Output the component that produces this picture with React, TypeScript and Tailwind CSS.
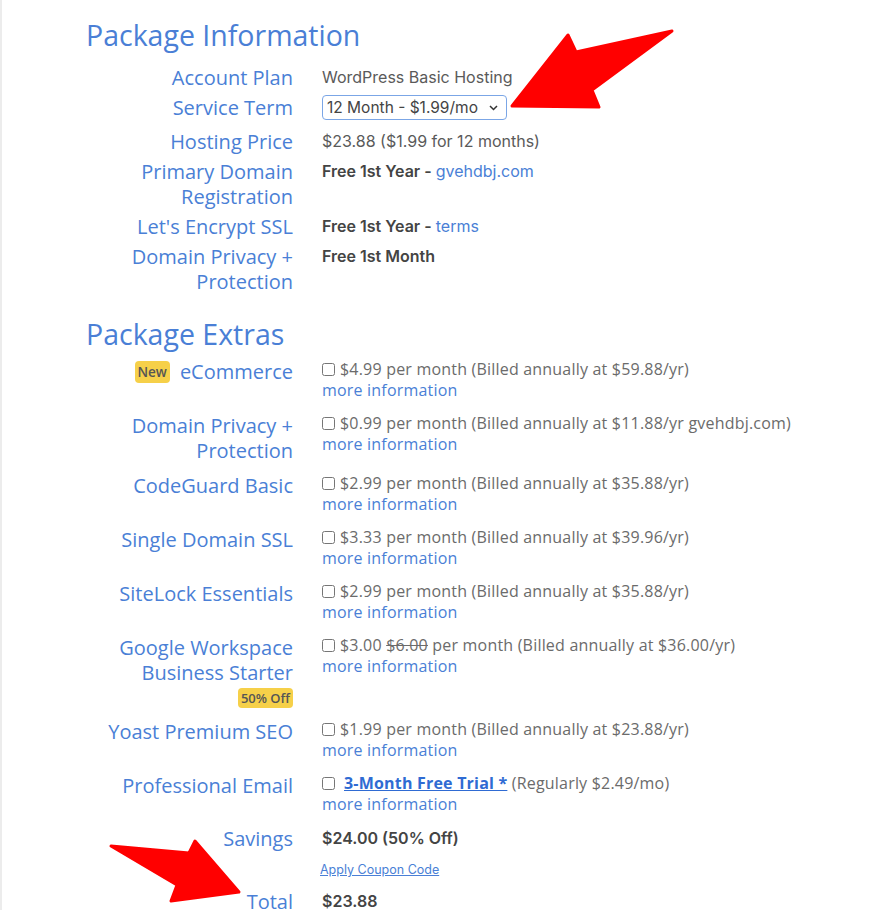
import React from "react";

const label = "w-[207px] shrink-0 text-right text-[20px] leading-[25px] text-[#4a7fd6]";
const val = "font-['Inter',sans-serif] text-[16px] leading-[25px] text-[#5a5a5a]";

function InfoRow({ name, children, className = "" }: { name: React.ReactNode; children?: React.ReactNode; className?: string }) {
  return (
    <div className={"flex gap-[29px] " + className}>
      <div className={label}>{name}</div>
      <div className={val}>{children}</div>
    </div>
  );
}

function ExtraRow({ name, children, className = "" }: { name: React.ReactNode; children: React.ReactNode; className?: string }) {
  return (
    <div className={"flex gap-[29px] " + className}>
      <div className={label}>{name}</div>
      <div className="text-[16px] leading-[21px] tracking-[0.2px] text-[#6b6b6b]">
        <div className="flex items-center">
          <input type="checkbox" className="m-0 mr-[5px] h-[13px] w-[13px] shrink-0" />
          <span>{children}</span>
        </div>
        <div className="text-[#4a7fd6]">more information</div>
      </div>
    </div>
  );
}

export default function App() {
  return (
    <div className="relative min-h-[910px] w-[884px] overflow-hidden border-l-2 border-[#ececec] bg-white pl-[84px] font-['Open_Sans',sans-serif]">
      <h2 className="pt-[16px] text-[28.5px] leading-[38px] text-[#4a7fd6]">Package Information</h2>

      <div className="mt-[11px] flex flex-col gap-[5px]">
        <InfoRow name="Account Plan">WordPress Basic Hosting</InfoRow>
        <InfoRow name="Service Term">
          <div className="flex h-[25px] w-[185px] items-center justify-between rounded-[4px] border border-[#7ba6e6] pl-[4px] pr-[8px] text-[15.5px] text-[#444]">
            <span>12 Month - $1.99/mo</span>
            <svg width="9" height="6" viewBox="0 0 9 6" fill="none">
              <path d="M1 1l3.5 3.5L8 1" stroke="#333" strokeWidth="1.5" />
            </svg>
          </div>
        </InfoRow>
        <InfoRow name="Hosting Price" className="mt-[4px]">$23.88 ($1.99 for 12 months)</InfoRow>
        <InfoRow name={<>Primary Domain<br />Registration</>}>
          <span className="font-semibold text-[#444]">Free 1st Year - </span>
          <span className="text-[#4a7fd6]">gvehdbj.com</span>
        </InfoRow>
        <InfoRow name="Let's Encrypt SSL">
          <span className="font-semibold text-[#444]">Free 1st Year - </span>
          <span className="text-[#4a7fd6]">terms</span>
        </InfoRow>
        <InfoRow name={<>Domain Privacy +<br />Protection</>}>
          <span className="font-semibold text-[#444]">Free 1st Month</span>
        </InfoRow>
      </div>

      <h2 className="mt-[21px] text-[28.5px] leading-[38px] text-[#4a7fd6]">Package Extras</h2>

      <div className="mt-[6px] flex flex-col gap-[12px]">
        <ExtraRow
          name={
            <span className="flex h-[25px] items-center justify-end gap-[10px]">
              <span className="rounded-[4px] bg-[#f6d049] px-[3px] text-[13.5px] leading-[22px] font-semibold text-[#555]">New</span>
              eCommerce
            </span>
          }
        >
          $4.99 per month (Billed annually at $59.88/yr)
        </ExtraRow>
        <ExtraRow name={<>Domain Privacy +<br />Protection</>} className="-mb-[2px]">
          $0.99 per month (Billed annually at $11.88/yr gvehdbj.com)
        </ExtraRow>
        <ExtraRow name="CodeGuard Basic">$2.99 per month (Billed annually at $35.88/yr)</ExtraRow>
        <ExtraRow name="Single Domain SSL">$3.33 per month (Billed annually at $39.96/yr)</ExtraRow>
        <ExtraRow name="SiteLock Essentials">$2.99 per month (Billed annually at $35.88/yr)</ExtraRow>
        <ExtraRow
          name={
            <>
              Google Workspace
              <br />
              Business Starter
              <div className="mt-[3px] flex justify-end">
                <span className="rounded-[4px] bg-[#f6d049] px-[3px] text-[13px] leading-[20px] font-semibold text-[#555]">50% Off</span>
              </div>
            </>
          }
          className="-mb-[1px]"
        >
          $3.00 <span className="line-through">$6.00</span> per month (Billed annually at $36.00/yr)
        </ExtraRow>
        <ExtraRow name="Yoast Premium SEO">$1.99 per month (Billed annually at $23.88/yr)</ExtraRow>
        <ExtraRow name="Professional Email">
          <span className="ml-[4px] font-bold text-[#2f6bd3] underline">3-Month Free Trial *</span> (Regularly $2.49/mo)
        </ExtraRow>
      </div>

      <InfoRow name="Savings" className="mt-[11px]">
        <span className="font-semibold text-[#444]">$24.00 (50% Off)</span>
      </InfoRow>
      <div className="mt-[10px] flex gap-[29px]">
        <div className="w-[207px] shrink-0" />
        <span className="-ml-[2px] font-['Inter',sans-serif] text-[12.5px] leading-[18px] text-[#4a7fd6] underline">Apply Coupon Code</span>
      </div>
      <InfoRow name="Total" className="mt-[10px]">
        <span className="font-semibold text-[#444]">$23.88</span>
      </InfoRow>

      <svg className="pointer-events-none absolute left-0 top-0" width="884" height="910" viewBox="0 0 884 910">
        <polygon
          points="510,106 566,35 574,52 670,31 590,90 597,107"
          fill="#ff0000"
          stroke="#ff0000"
          strokeWidth="3"
          strokeLinejoin="round"
        />
        <polygon
          points="109,846 187,853 193,841 237,892 169,901 175,885"
          fill="#ff0000"
          stroke="#ff0000"
          strokeWidth="3"
          strokeLinejoin="round"
        />
      </svg>
    </div>
  );
}
